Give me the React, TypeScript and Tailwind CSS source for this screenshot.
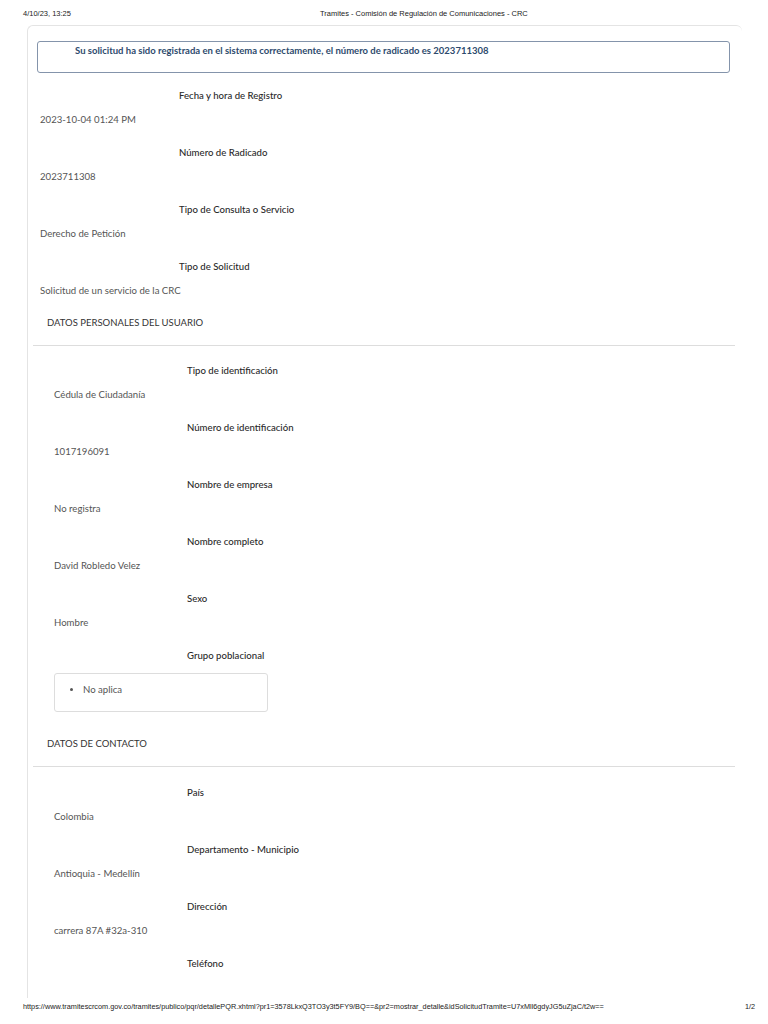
import React from "react";

type Field = { label: string; value: string };

const registro: Field[] = [
  { label: "Fecha y hora de Registro", value: "2023-10-04 01:24 PM" },
  { label: "Número de Radicado", value: "2023711308" },
  { label: "Tipo de Consulta o Servicio", value: "Derecho de Petición" },
  { label: "Tipo de Solicitud", value: "Solicitud de un servicio de la CRC" },
];

const personales: Field[] = [
  { label: "Tipo de identificación", value: "Cédula de Ciudadanía" },
  { label: "Número de identificación", value: "1017196091" },
  { label: "Nombre de empresa", value: "No registra" },
  { label: "Nombre completo", value: "David Robledo Velez" },
  { label: "Sexo", value: "Hombre" },
];

const contacto: Field[] = [
  { label: "País", value: "Colombia" },
  { label: "Departamento - Municipio", value: "Antioquia - Medellín" },
  { label: "Dirección", value: "carrera 87A #32a-310" },
];

const FieldLabel = ({ text, indent }: { text: string; indent: string }) => (
  <div className={`h-[24px] leading-[26px] font-medium text-[#2a2a2a] ${indent}`}>{text}</div>
);

const FieldRows = ({ fields, labelIndent, valueIndent }: { fields: Field[]; labelIndent: string; valueIndent: string }) => (
  <>
    {fields.map((f) => (
      <div key={f.label}>
        <FieldLabel text={f.label} indent={labelIndent} />
        <div className={`h-[33px] leading-[26px] text-[#555] ${valueIndent}`}>{f.value}</div>
      </div>
    ))}
  </>
);

const SectionTitle = ({ text }: { text: string }) => (
  <>
    <div className="h-[24px] leading-[24px] pl-[19px] text-[9.5px] text-[#333]">{text}</div>
    <div className="mt-[10px] h-px bg-[#ddd] ml-[5px] mr-[7px]" />
  </>
);

export default function App() {
  return (
    <div className="w-[768px] h-[1024px] bg-white flex flex-col font-['Liberation_Sans',Arial,sans-serif] overflow-hidden">
      {/* print header */}
      <div className="h-[25px] flex items-start pt-[10px] text-[7.5px] leading-[8px] text-[#222]">
        <div className="w-[320px] pl-[23px]">4/10/23, 13:25</div>
        <div>Tramites - Comisión de Regulación de Comunicaciones - CRC</div>
      </div>

      <div className="flex-1 ml-[27px] w-[715px] border-l border-t border-[#e4e4e4] rounded-tl-md rounded-tr-md font-['Lato','Noto_Sans',sans-serif] text-[9.6px]">
        <div className="mt-[15px] ml-[9px] mr-[12px] h-[32px] border border-[#8494ab] rounded-[3px] pt-[3px] pl-[37px] leading-[12px] text-[9.5px] font-bold text-[#2d4a6d]">
          Su solicitud ha sido registrada en el sistema correctamente, el número de radicado es 2023711308
        </div>

        <div className="mt-[10px]">
          <FieldRows fields={registro} labelIndent="pl-[151px]" valueIndent="pl-[12px]" />
        </div>

        <SectionTitle text="DATOS PERSONALES DEL USUARIO" />

        <div className="mt-[12px]">
          <FieldRows fields={personales} labelIndent="pl-[159px]" valueIndent="pl-[26px]" />
          <FieldLabel text="Grupo poblacional" indent="pl-[159px]" />
          <div className="mt-[6px] ml-[26px] w-[214px] h-[39px] border border-[#ddd] rounded-[3px] pt-[10px] pl-[19px] text-[#555]">
            <ul className="list-disc pl-[9px] leading-[12px]">
              <li>No aplica</li>
            </ul>
          </div>
        </div>

        <div className="mt-[20px]">
          <SectionTitle text="DATOS DE CONTACTO" />
        </div>

        <div className="mt-[13px]">
          <FieldRows fields={contacto} labelIndent="pl-[159px]" valueIndent="pl-[26px]" />
          <FieldLabel text="Teléfono" indent="pl-[159px]" />
        </div>
      </div>

      {/* print footer */}
      <div className="h-[26px] flex items-start pt-[5px] text-[7.3px] leading-[8px] text-[#222]">
        <div className="w-[745px] pl-[23px] whitespace-nowrap">
          https://www.tramitescrcom.gov.co/tramites/publico/pqr/detallePQR.xhtml?pr1=3578LkxQ3TO3y3t5FY9/BQ==&amp;pr2=mostrar_detalle&amp;idSolicitudTramite=U7xMll6gdyJG5uZjaC/t2w==
        </div>
        <div>1/2</div>
      </div>
    </div>
  );
}
